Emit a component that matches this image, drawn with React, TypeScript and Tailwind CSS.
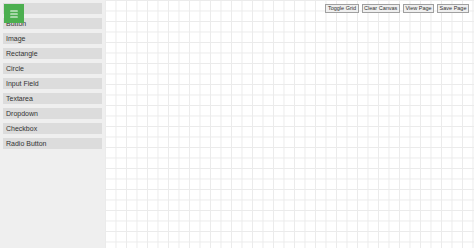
import { Menu } from 'lucide-react';

const items = ['Text', 'Button', 'Image', 'Rectangle', 'Circle', 'Input Field', 'Textarea', 'Dropdown', 'Checkbox', 'Radio Button'];
const actions = ['Toggle Grid', 'Clear Canvas', 'View Page', 'Save Page'];

export default function App() {
    return (
        <div className="relative flex h-screen w-full overflow-hidden bg-white font-['Liberation_Sans',Arial,sans-serif]">
            {/* sidebar with draggable components */}
            <aside className="flex w-[105px] shrink-0 flex-col gap-[4px] bg-[#efefef] px-[3px] pt-[3px]">
                {items.map((item) => (
                    <div key={item} className="flex h-[11px] items-center bg-[#dcdcdc] pl-[3px] text-[7px] leading-none text-[#333]">
                        {item}
                    </div>
                ))}
            </aside>

            {/* canvas */}
            <main className="relative flex-1 bg-white bg-[linear-gradient(to_right,#ebebeb_1px,transparent_1px),linear-gradient(to_bottom,#ebebeb_1px,transparent_1px)] bg-[size:10.5px_10.5px]">
                <div className="absolute right-[5px] top-[4px] flex gap-[3px]">
                    {actions.map((a) => (
                        <button key={a} className="h-[9px] border border-[#a0a0a0] bg-[#efefef] px-[1.5px] text-[5.5px] leading-none text-[#333]">
                            {a}
                        </button>
                    ))}
                </div>
            </main>

            <button className="absolute left-[4px] top-[4px] flex h-[19px] w-[20px] items-center justify-center bg-[#4caf50] text-white">
                <Menu size={10} strokeWidth={2.5} />
            </button>
        </div>
    );
}
